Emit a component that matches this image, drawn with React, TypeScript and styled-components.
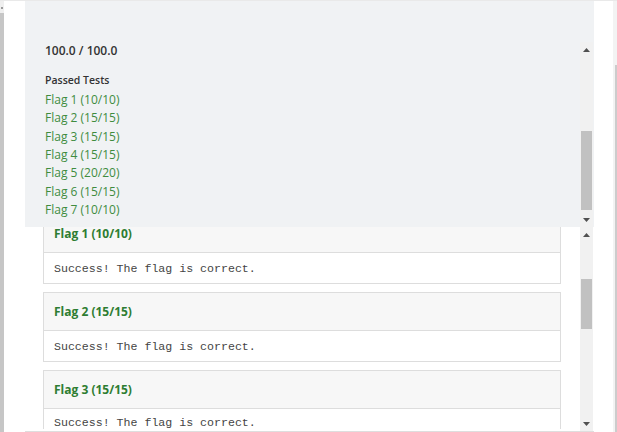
import React from 'react'
import styled, { createGlobalStyle, css } from 'styled-components'

const GlobalStyle = createGlobalStyle`
  html, body {
    margin: 0;
    padding: 0;
    background: #fff;
  }
  body {
    font-family: 'Open Sans', 'Noto Sans', sans-serif;
  }
`

const passedTests = [
  { name: 'Flag 1', score: '10/10' },
  { name: 'Flag 2', score: '15/15' },
  { name: 'Flag 3', score: '15/15' },
  { name: 'Flag 4', score: '15/15' },
  { name: 'Flag 5', score: '20/20' },
  { name: 'Flag 6', score: '15/15' },
  { name: 'Flag 7', score: '10/10' },
]

type Clip = 'top' | 'bottom' | undefined

const ArrowIcon = ({ down }: { down?: boolean }) => (
  <svg width="7" height="4" viewBox="0 0 7 4">
    <path d={down ? 'M0 0 H7 L3.5 4 Z' : 'M0 4 H7 L3.5 0 Z'} fill="#505050" />
  </svg>
)

interface ScrollbarProps {
  thumbTop: number
  thumbHeight: number
}

const Scrollbar = ({ thumbTop, thumbHeight }: ScrollbarProps) => (
  <StyledScrollbar>
    <StyledArrow>
      <ArrowIcon />
    </StyledArrow>
    <StyledTrack>
      <StyledThumb style={{ marginTop: thumbTop, height: thumbHeight }} />
    </StyledTrack>
    <StyledArrow>
      <ArrowIcon down />
    </StyledArrow>
  </StyledScrollbar>
)

// the feedback list is scrolled a little: first card's top and last card's bottom are out of view
const visibleCards: { name: string; score: string; clip: Clip }[] = [
  { ...passedTests[0], clip: 'top' },
  { ...passedTests[1], clip: undefined },
  { ...passedTests[2], clip: 'bottom' },
]

const App = () => {
  return (
    <>
      <GlobalStyle />
      <StyledPage>
        <StyledLeftRail>
          <span />
          <div />
        </StyledLeftRail>
        <StyledMain>
          <StyledResultPanel>
            <StyledScrollArea>
              <StyledSummary>
                <StyledScore>100.0 / 100.0</StyledScore>
                <StyledSubheading>Passed Tests</StyledSubheading>
                <StyledTestList>
                  {passedTests.map((t) => (
                    <li key={t.name}>
                      {t.name} ({t.score})
                    </li>
                  ))}
                </StyledTestList>
              </StyledSummary>
              <Scrollbar thumbTop={74} thumbHeight={79} />
            </StyledScrollArea>
          </StyledResultPanel>
          <StyledFeedback>
            <StyledCards>
              {visibleCards.map((t) => (
                <StyledCard key={t.name} $clip={t.clip}>
                  <StyledCardHeader $clip={t.clip}>
                    {t.name} ({t.score})
                  </StyledCardHeader>
                  <StyledCardBody $clip={t.clip}>
                    Success! The flag is correct.
                  </StyledCardBody>
                </StyledCard>
              ))}
            </StyledCards>
            <Scrollbar thumbTop={37} thumbHeight={50} />
          </StyledFeedback>
        </StyledMain>
        <StyledRightRail>
          <div />
        </StyledRightRail>
      </StyledPage>
    </>
  )
}

const StyledPage = styled.div`
  width: 617px;
  height: 432px;
  box-sizing: border-box;
  border-top: 1px solid #e9e9e9;
  display: flex;
  overflow: hidden;
`

const StyledLeftRail = styled.div`
  width: 4px;
  display: flex;
  flex-direction: column;
  background: #efefef;

  span {
    display: block;
    width: 2px;
    height: 2px;
    margin: 6px 0 4px 1px;
    background: #9a9a9a;
  }

  div {
    flex: 1;
    background: #c6c6c6;
  }
`

const StyledMain = styled.div`
  width: 569px;
  margin-left: 21px;
  display: flex;
  flex-direction: column;
`

const StyledRightRail = styled.div`
  width: 4px;
  margin-left: 19px;
  background: #f3f3f3;

  div {
    width: 2px;
    height: 100%;
    margin: 64px 0 0 2px;
    background: #cccccc;
  }
`

const StyledResultPanel = styled.div`
  height: 226px;
  flex-shrink: 0;
  box-sizing: border-box;
  padding-top: 41px;
  background: #f0f2f4;
  display: flex;
  flex-direction: column;
`

const StyledScrollArea = styled.div`
  flex: 1;
  display: flex;
  overflow: hidden;
`

const StyledSummary = styled.div`
  flex: 1;
  padding-left: 20px;
  overflow: hidden;
`

const StyledScore = styled.div`
  font-size: 12px;
  line-height: 17px;
  font-weight: 600;
  color: #333;
`

const StyledSubheading = styled.div`
  margin-top: 13px;
  font-size: 10.5px;
  line-height: 16px;
  font-weight: 600;
  color: #333;
`

const StyledTestList = styled.ul`
  list-style: none;
  margin: 3px 0 0;
  padding: 0;

  li {
    font-size: 12px;
    line-height: 18.33px;
    color: #3f8c3f;
  }
`

const StyledScrollbar = styled.div`
  width: 13px;
  margin-right: 1px;
  flex-shrink: 0;
  display: flex;
  flex-direction: column;
  background: #f1f1f1;
`

const StyledArrow = styled.div`
  height: 15px;
  display: flex;
  align-items: center;
  justify-content: center;
`

const StyledTrack = styled.div`
  flex: 1;
  display: flex;
  flex-direction: column;
`

const StyledThumb = styled.div`
  margin: 0 1px;
  background: #c1c1c1;
`

const StyledFeedback = styled.div`
  flex: 1;
  display: flex;
  border-bottom: 1px solid #dedede;
`

const StyledCards = styled.div`
  width: 518px;
  margin: 0 19px 0 18px;
  display: flex;
  flex-direction: column;
  gap: 8px;
`

const StyledCard = styled.div<{ $clip: Clip }>`
  flex-shrink: 0;
  border: 1px solid #dddddd;
  ${({ $clip }) => $clip === 'top' && 'border-top: none;'}
  ${({ $clip }) => $clip === 'bottom' && 'border-bottom: none;'}
`

const StyledCardHeader = styled.div<{ $clip: Clip }>`
  height: 37px;
  padding-left: 10px;
  display: flex;
  align-items: center;
  background: #f7f7f7;
  border-bottom: 1px solid #dddddd;
  font-size: 12px;
  font-weight: 700;
  color: #2e7d32;

  ${({ $clip }) =>
    $clip === 'top' &&
    css`
      height: 25px;
      align-items: flex-start;
      line-height: 14px;
    `}
`

const StyledCardBody = styled.div<{ $clip: Clip }>`
  height: 30px;
  padding-left: 10px;
  display: flex;
  align-items: center;
  font-family: 'Liberation Mono', 'Courier New', monospace;
  font-size: 11.6px;
  color: #444;

  ${({ $clip }) =>
    $clip === 'bottom' &&
    css`
      height: 20px;
      align-items: flex-end;
      line-height: 13px;
    `}
`

export default App
